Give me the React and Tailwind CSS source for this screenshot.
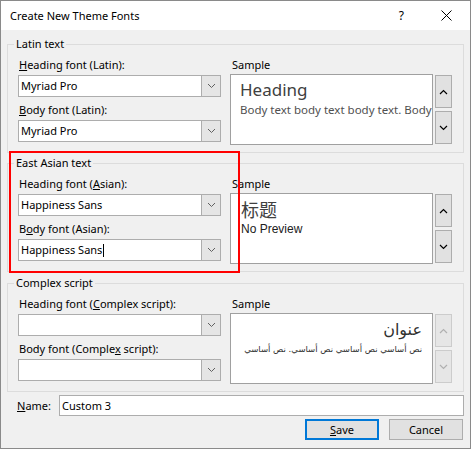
import React from "react";

const UI = "font-['Noto_Sans','Liberation_Sans',sans-serif]";

function ComboChevron() {
  return (
    <svg width="9" height="6" viewBox="0 0 9 6" className="block">
      <polyline points="1,1 4.5,4.5 8,1" fill="none" stroke="#606060" strokeWidth="1" />
    </svg>
  );
}

function Combo({ value, cursor }) {
  return (
    <div className="flex h-[22px] w-[203px] border border-[#adadad] bg-white">
      <div className="flex flex-1 items-center pl-[2px] text-[11px] leading-[16px] text-black">
        <span>{value}</span>
        {cursor && <span className="ml-[1px] inline-block h-[13px] w-[1px] bg-black" />}
      </div>
      <div className="flex w-[19px] items-center justify-center border-l border-[#adadad] bg-[#e5e5e5]">
        <ComboChevron />
      </div>
    </div>
  );
}

function Spin({ dir, disabled }) {
  const color = disabled ? "#b0b0b0" : "#000000";
  return (
    <div
      className={
        "flex h-[33px] w-[17px] items-center justify-center border " +
        (disabled ? "border-[#cccccc] bg-[#e6e6e6]" : "border-[#adadad] bg-[#e1e1e1]")
      }
    >
      <svg width="9" height="6" viewBox="0 0 9 6" className="block">
        {dir === "up" ? (
          <polyline points="1,5 4.5,1.5 8,5" fill="none" stroke={color} strokeWidth="1.2" />
        ) : (
          <polyline points="1,1 4.5,4.5 8,1" fill="none" stroke={color} strokeWidth="1.2" />
        )}
      </svg>
    </div>
  );
}

function Group({ title, heading, body, sample, disabledSpin, cursor, headingValue, bodyValue, className }) {
  return (
    <fieldset className={"w-[457px] border border-[#dcdcdc] pl-[10px] pr-[10px] pb-[7px] " + (className || "")}>
      <legend className="ml-[-4px] px-[2px] text-[11px] leading-[16px]">{title}</legend>
      <div className="flex pt-[5px]">
        <div className="flex w-[203px] flex-col">
          <div className="ml-[1px] text-[11px] leading-[16px]">{heading}</div>
          <div className="mt-[2px]">
            <Combo value={headingValue} />
          </div>
          <div className="ml-[1px] mt-[5px] text-[11px] leading-[16px]">{body}</div>
          <div className="mt-[2px]">
            <Combo value={bodyValue} cursor={cursor} />
          </div>
        </div>
        <div className="ml-[9px] flex flex-col">
          <div className="ml-[2px] text-[11px] leading-[16px]">Sample</div>
          <div className="mt-[1px] flex">
            <div className="h-[71px] w-[203px] overflow-hidden border border-[#a0a0a0] bg-white">{sample}</div>
            <div className="ml-[2px] flex flex-col pt-[1px]">
              <Spin dir="up" disabled={disabledSpin} />
              <div className="mt-[3px]">
                <Spin dir="down" disabled={disabledSpin} />
              </div>
            </div>
          </div>
        </div>
      </div>
    </fieldset>
  );
}

export default function App() {
  return (
    <div className={"relative flex h-[449px] w-[471px] flex-col border border-[#8a8a8a] bg-[#f0f0f0] text-black " + UI}>
      {/* Title bar */}
      <div className="flex h-[29px] items-center bg-white pl-[9px]">
        <span className="text-[11px] leading-[16px]">Create New Theme Fonts</span>
        <span className="ml-auto mr-[37px] text-[12px] leading-[16px]">?</span>
        <svg width="11" height="11" viewBox="0 0 11 11" className="mr-[18px] block">
          <line x1="0.5" y1="0.5" x2="10.5" y2="10.5" stroke="#000" strokeWidth="1" />
          <line x1="10.5" y1="0.5" x2="0.5" y2="10.5" stroke="#000" strokeWidth="1" />
        </svg>
      </div>

      {/* Body */}
      <div className="flex flex-col px-[6px] pt-[6px]">
        <Group
          title="Latin text"
          heading={<><u>H</u>eading font (Latin):</>}
          body={<><u>B</u>ody font (Latin):</>}
          headingValue="Myriad Pro"
          bodyValue="Myriad Pro"
          sample={
            <div className="flex flex-col whitespace-nowrap pl-[9px] pt-[3px]">
              <span className="text-[17px] leading-[24px] text-[#404040]">Heading</span>
              <span className="text-[11.5px] leading-[15px] text-[#505050]">Body text body text body text. Body</span>
            </div>
          }
        />
        <Group
          className="mt-[2px]"
          title="East Asian text"
          heading={<>Heading font (<u>A</u>sian):</>}
          body={<>B<u>o</u>dy font (Asian):</>}
          headingValue="Happiness Sans"
          bodyValue="Happiness Sans"
          cursor
          sample={
            <div className="flex flex-col whitespace-nowrap pl-[10px] pt-[3px]">
              <span className="font-['Noto_Sans_CJK_SC',sans-serif] text-[18px] leading-[24px] text-[#404040]">标题</span>
              <span className="font-['Liberation_Sans',sans-serif] text-[12px] leading-[16px] text-[#202020]">No Preview</span>
            </div>
          }
        />
        <Group
          className="mt-[3px]"
          title="Complex script"
          heading={<>Heading font (<u>C</u>omplex script):</>}
          body={<>Body font (Comple<u>x</u> script):</>}
          headingValue=""
          bodyValue=""
          disabledSpin
          sample={
            <div dir="rtl" className="flex flex-col whitespace-nowrap pr-[10px] pt-[5px] font-['DejaVu_Sans',sans-serif]">
              <span className="text-[16px] leading-[22px] text-[#303030]">عنوان</span>
              <span className="text-[8.5px] leading-[16px] text-[#303030]">نص أساسي نص أساسي نص أساسي. نص أساسي</span>
            </div>
          }
        />

        {/* Name row */}
        <div className="mt-[3px] flex items-center">
          <span className="ml-[10px] w-[42px] text-[11px] leading-[16px]"><u>N</u>ame:</span>
          <div className="flex h-[21px] w-[405px] items-center border border-[#adadad] bg-white pl-[2px] text-[11px] leading-[16px]">
            Custom 3
          </div>
        </div>

        {/* Buttons */}
        <div className="mt-[3px] flex justify-end pr-[1px]">
          <button className="flex h-[21px] w-[74px] items-center justify-center border-2 border-[#0078d7] bg-[#e1e1e1] text-[11px] leading-[16px]">
            <span><u>S</u>ave</span>
          </button>
          <button className="ml-[10px] flex h-[21px] w-[74px] items-center justify-center border border-[#adadad] bg-[#e1e1e1] text-[11px] leading-[16px]">
            Cancel
          </button>
        </div>
      </div>

      {/* Red highlight */}
      <div className="pointer-events-none absolute left-[8px] top-[150px] h-[122px] w-[231px] border-2 border-[#ff0000]" />
    </div>
  );
}
